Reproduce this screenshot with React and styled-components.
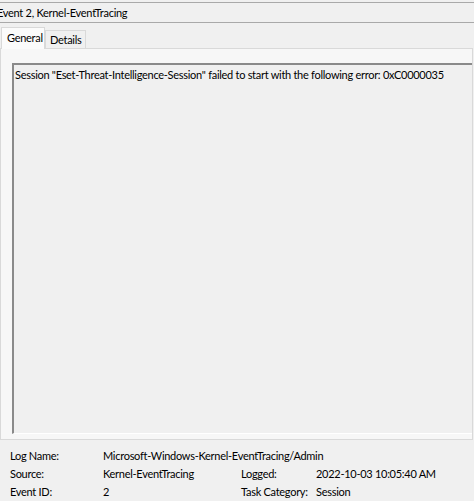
import React from "react";
import styled, { createGlobalStyle } from "styled-components";

const Global = createGlobalStyle`
  html, body {
    margin: 0;
    padding: 0;
    background: #f0f0f0;
    overflow: hidden;
  }
  body {
    font-family: Lato, "Noto Sans", sans-serif;
    font-size: 11px;
    letter-spacing: -0.28px;
    color: #000;
  }
`;

const Window = styled.div`
  width: 474px;
  height: 501px;
  overflow: hidden;
  display: flex;
  flex-direction: column;
`;

const TitleBar = styled.div`
  margin-top: 2px;
  height: 19px;
  line-height: 19px;
  border-top: 1px solid #a9a9a9;
  border-bottom: 1px solid #a9a9a9;
  text-indent: -3px;
  white-space: nowrap;
`;

const TabStrip = styled.div`
  display: flex;
  align-items: flex-end;
  height: 25px;
  padding-left: 1px;
`;

const Tab = styled.div`
  box-sizing: border-box;
  width: ${(p) => p.$w}px;
  height: ${(p) => (p.$active ? 22 : 18)}px;
  line-height: ${(p) => (p.$active ? 20 : 17)}px;
  padding-left: ${(p) => (p.$active ? 5 : 4)}px;
  background: ${(p) => (p.$active ? "#fbfbfb" : "#f0f0f0")};
  border: 1px solid #d9d9d9;
  border-bottom: none;
  margin-bottom: ${(p) => (p.$active ? -1 : 0)}px;
  position: relative;
  z-index: ${(p) => (p.$active ? 1 : 0)};
  white-space: nowrap;
`;

const Panel = styled.div`
  box-sizing: border-box;
  width: 473px;
  height: 392px;
  border: 1px solid #d9d9d9;
  background: #f7f7f7;
  padding: 14px 0 0 11px;
  overflow: hidden;
`;

const MessageBox = styled.div`
  box-sizing: border-box;
  width: 480px;
  height: 371px;
  border-top: 2px solid #8a8a8a;
  border-left: 2px solid #8a8a8a;
  border-bottom: 1px solid #ffffff;
  background: #f0f0f0;
  padding: 3px 0 0 1px;
  white-space: nowrap;
`;

const Details = styled.div`
  display: grid;
  grid-template-columns: 93px 138px 75px 1fr;
  grid-auto-rows: 18px;
  padding: 7px 0 0 10px;
  line-height: 18px;
  white-space: nowrap;
`;

const Wide = styled.div`
  grid-column: 2 / span 3;
`;

export default function App() {
  return (
    <Window>
      <Global />
      <TitleBar>Event 2, Kernel-EventTracing</TitleBar>
      <TabStrip>
        <Tab $active $w={44}>General</Tab>
        <Tab $w={41}>Details</Tab>
      </TabStrip>
      <Panel>
        <MessageBox>
          Session "Eset-Threat-Intelligence-Session" failed to start with the following error: 0xC0000035
        </MessageBox>
      </Panel>
      <Details>
        <div>Log Name:</div>
        <Wide>Microsoft-Windows-Kernel-EventTracing/Admin</Wide>
        <div>Source:</div>
        <div>Kernel-EventTracing</div>
        <div>Logged:</div>
        <div>2022-10-03 10:05:40 AM</div>
        <div>Event ID:</div>
        <div>2</div>
        <div>Task Category:</div>
        <div>Session</div>
      </Details>
    </Window>
  );
}
